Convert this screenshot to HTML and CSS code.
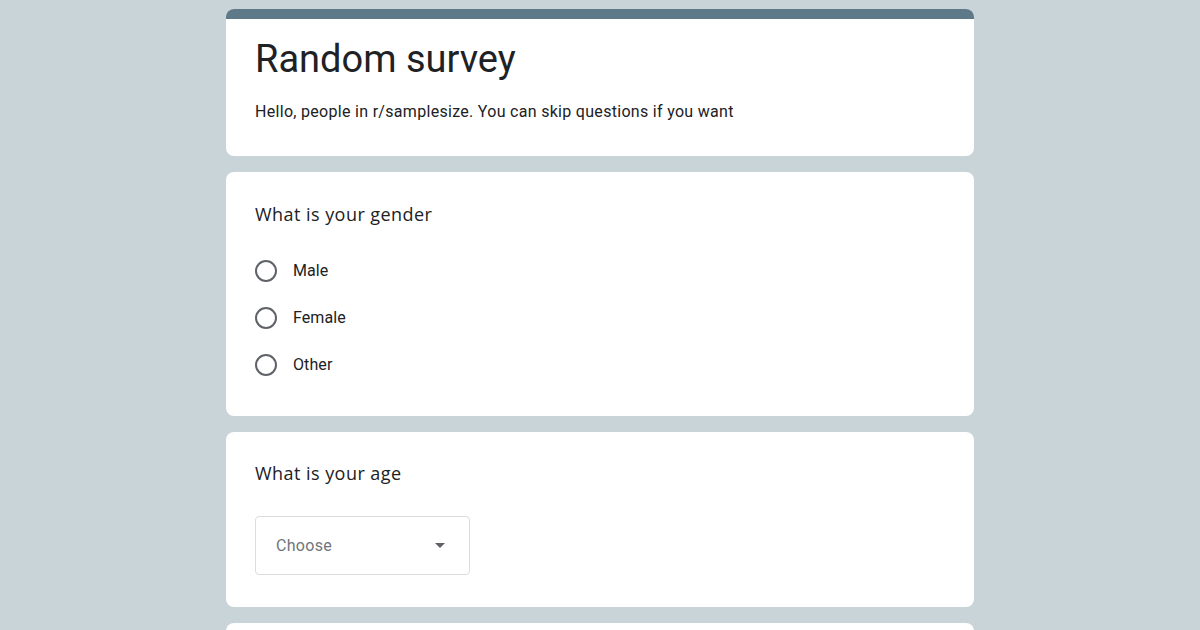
FILE: index.html
```html
<!DOCTYPE html>
<html>
<head>
<meta charset="utf-8">
<link rel="stylesheet" href="styles.css">
</head>
<body>
<main class="form">
  <section class="card header-card">
    <div class="accent"></div>
    <div class="header-body">
      <h1 class="title">Random survey</h1>
      <p class="desc">Hello, people in r/samplesize. You can skip questions if you want</p>
    </div>
  </section>

  <section class="card question gender">
    <h2 class="q-title">What is your gender</h2>
    <ul class="options">
      <li class="option"><span class="radio"></span><span class="opt-label">Male</span></li>
      <li class="option"><span class="radio"></span><span class="opt-label">Female</span></li>
      <li class="option"><span class="radio"></span><span class="opt-label">Other</span></li>
    </ul>
  </section>

  <section class="card question age">
    <h2 class="q-title">What is your age</h2>
    <div class="select">
      <span class="select-text">Choose</span>
      <svg class="caret" width="10" height="5" viewBox="0 0 10 5"><path d="M0 0 L10 0 L5 5 Z" fill="#5f6368"/></svg>
    </div>
  </section>

  <section class="card question next"></section>
</main>
</body>
</html>
```

FILE: styles.css
```css
html, body {
  margin: 0;
  padding: 0;
  background: #c9d4d9;
  font-family: Roboto, "Noto Sans", Arial, sans-serif;
  color: #202124;
  overflow: hidden;
  height: 630px;
}

.form {
  width: 748px;
  margin: 9px auto 0;
  display: flex;
  flex-direction: column;
  gap: 16px;
}

.card {
  background: #ffffff;
  border-radius: 8px;
  box-sizing: border-box;
}

.header-card {
  height: 147px;
  overflow: hidden;
}

.accent {
  height: 10px;
  background: #5e7a88;
}

.header-body {
  padding: 16px 29px 0;
}

.title {
  margin: 0;
  font-size: 38px;
  line-height: 48px;
  font-weight: 400;
  color: #202124;
}

.desc {
  margin: 19px 0 0;
  font-size: 16px;
  line-height: 20px;
  letter-spacing: 0.3px;
  color: #202124;
}

.question {
  padding: 30px 29px 0;
}

.q-title {
  margin: 0;
  font-family: "Open Sans", Roboto, Arial, sans-serif;
  font-size: 18px;
  line-height: 24px;
  font-weight: 400;
  letter-spacing: 0.45px;
  color: #202124;
}

.options {
  list-style: none;
  margin: 34px 0 0;
  padding: 0;
  display: flex;
  flex-direction: column;
  gap: 25px;
}

.option {
  display: flex;
  align-items: center;
  height: 22px;
}

.radio {
  width: 22px;
  height: 22px;
  box-sizing: border-box;
  border: 2px solid #5f6368;
  border-radius: 50%;
  flex: none;
}

.opt-label {
  margin-left: 16px;
  font-size: 16px;
  line-height: 20px;
  letter-spacing: 0.1px;
  color: #202124;
}

.gender {
  height: 244px;
}

.age {
  height: 175px;
  padding-top: 29px;
}

.select {
  margin-top: 31px;
  width: 215px;
  height: 59px;
  box-sizing: border-box;
  border: 1px solid #dadce0;
  border-radius: 4px;
  display: flex;
  align-items: center;
  justify-content: space-between;
  padding: 0 24px 0 20px;
}

.select-text {
  font-size: 16px;
  letter-spacing: 0.3px;
  color: #70757a;
}

.caret {
  display: block;
}

.next {
  height: 40px;
}
```
